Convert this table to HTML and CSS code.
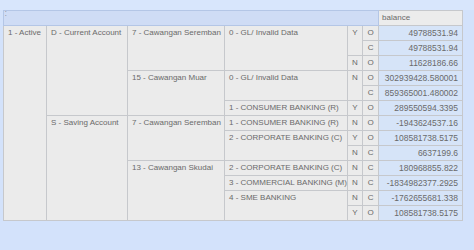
FILE: index.html
```html
<!DOCTYPE html>
<html>
<head>
<meta charset="utf-8">
<link rel="stylesheet" href="styles.css">
</head>
<body>
<div class="page">
<table class="crosstab">
<colgroup>
<col class="c1"><col class="c2"><col class="c3"><col class="c4"><col class="c5"><col class="c6"><col class="c7">
</colgroup>
<thead>
<tr><th class="corner" colspan="6"><span class="grip">⁚</span></th><th class="measure">balance</th></tr>
</thead>
<tbody>
<tr><td rowspan="13">1 - Active</td><td rowspan="6">D - Current Account</td><td rowspan="3">7 - Cawangan Seremban</td><td rowspan="3">0 - GL/ Invalid Data</td><td rowspan="2" class="flag">Y</td><td class="flag">O</td><td class="val">49788531.94</td></tr>
<tr><td class="flag">C</td><td class="val">49788531.94</td></tr>
<tr><td class="flag">N</td><td class="flag">O</td><td class="val">11628186.66</td></tr>
<tr><td rowspan="3">15 - Cawangan Muar</td><td rowspan="2">0 - GL/ Invalid Data</td><td rowspan="2" class="flag">N</td><td class="flag">O</td><td class="val">302939428.580001</td></tr>
<tr><td class="flag">C</td><td class="val">859365001.480002</td></tr>
<tr><td>1 - CONSUMER BANKING (R)</td><td class="flag">Y</td><td class="flag">O</td><td class="val">289550594.3395</td></tr>
<tr><td rowspan="7">S - Saving Account</td><td rowspan="3">7 - Cawangan Seremban</td><td>1 - CONSUMER BANKING (R)</td><td class="flag">N</td><td class="flag">O</td><td class="val">-1943624537.16</td></tr>
<tr><td rowspan="2">2 - CORPORATE BANKING (C)</td><td class="flag">Y</td><td class="flag">O</td><td class="val">108581738.5175</td></tr>
<tr><td class="flag">N</td><td class="flag">C</td><td class="val">6637199.6</td></tr>
<tr><td rowspan="4">13 - Cawangan Skudai</td><td>2 - CORPORATE BANKING (C)</td><td class="flag">N</td><td class="flag">C</td><td class="val">180968855.822</td></tr>
<tr><td>3 - COMMERCIAL BANKING (M)</td><td class="flag">N</td><td class="flag">C</td><td class="val">-1834982377.2925</td></tr>
<tr><td rowspan="2">4 - SME BANKING</td><td class="flag">N</td><td class="flag">C</td><td class="val">-1762655681.338</td></tr>
<tr><td class="flag">Y</td><td class="flag">O</td><td class="val">108581738.5175</td></tr>
</tbody>
</table>
</div>
</body>
</html>
```
FILE: styles.css
```css
html, body {
  margin: 0;
  padding: 0;
}
body {
  background: #d3e2fb;
  width: 474px;
  height: 250px;
  overflow: hidden;
  font-family: "Liberation Sans", Arial, sans-serif;
}
.page {
  padding: 10px 0 0 3px;
  background: linear-gradient(#d8e6fc 0, #d8e6fc 10px, #d3e2fb 10px);
  height: 240px;
}
.crosstab {
  border-collapse: collapse;
  table-layout: fixed;
  width: 459px;
  font-size: 8px;
  color: #6a6a6a;
}
.c1 { width: 43px; }
.c2 { width: 81px; }
.c3 { width: 97px; }
.c4 { width: 123px; }
.c5 { width: 15px; }
.c6 { width: 16px; }
.c7 { width: 84px; }
.crosstab th,
.crosstab td {
  border: 1px solid #c6c8cc;
  height: 14px;
  line-height: 14px;
  padding: 0 3px 0 4px;
  vertical-align: top;
  text-align: left;
  font-weight: normal;
  white-space: nowrap;
  overflow: hidden;
  background: #ebebeb;
}
.crosstab th.corner {
  background: #cfdcf5;
  border-color: #b4c6e6;
  padding: 0 0 0 1px;
  line-height: 6px;
}
.grip {
  font-size: 7px;
  color: #777;
}
.crosstab th.measure {
  background: #ececec;
  padding-left: 3px;
}
.crosstab td.flag {
  padding: 0;
  text-align: center;
}
.crosstab td.val {
  background: #d6e4f8;
  text-align: right;
  padding-right: 4px;
  font-size: 8.5px;
}
```
